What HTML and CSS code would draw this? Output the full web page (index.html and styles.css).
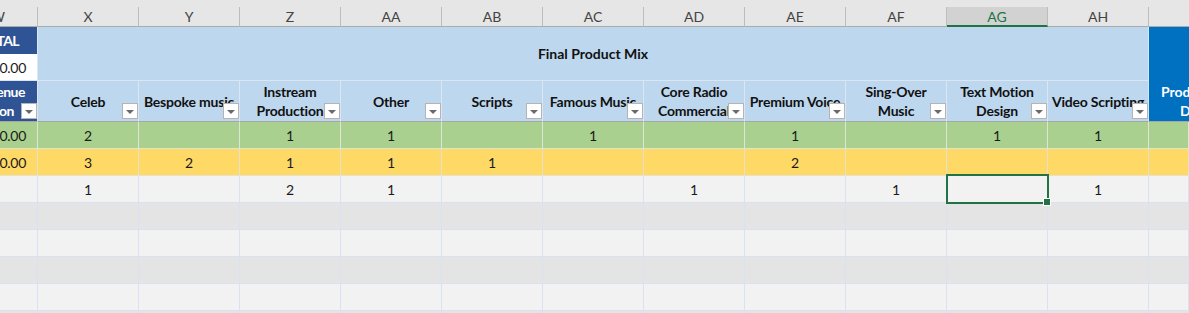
FILE: index.html
```html
<!DOCTYPE html>
<html>
<head>
<meta charset="utf-8">
<link rel="stylesheet" href="styles.css">
</head>
<body>
<div class="sheet">
  <div class="topstrip"></div>

  <div class="col col-w">W</div>
  <div class="col">X</div>
  <div class="col">Y</div>
  <div class="col">Z</div>
  <div class="col">AA</div>
  <div class="col">AB</div>
  <div class="col">AC</div>
  <div class="col">AD</div>
  <div class="col">AE</div>
  <div class="col">AF</div>
  <div class="col col-sel">AG</div>
  <div class="col">AH</div>
  <div class="col col-last"></div>

  <div class="navy total">TAL</div>
  <div class="title">Final Product Mix</div>
  <div class="bright bright-top"></div>
  <div class="whitecell amount">00.00</div>

  <div class="navy hdr-w"><span class="l1">enue</span><span class="l2">on</span><span class="dd"></span></div>
  <div class="hdr"><span>Celeb</span><span class="dd"></span></div>
  <div class="hdr"><span>Bespoke music</span><span class="dd"></span></div>
  <div class="hdr"><span>Instream<br>Production</span><span class="dd"></span></div>
  <div class="hdr"><span>Other</span><span class="dd"></span></div>
  <div class="hdr"><span>Scripts</span><span class="dd"></span></div>
  <div class="hdr"><span>Famous Music</span><span class="dd"></span></div>
  <div class="hdr"><span>Core Radio<br>Commercial</span><span class="dd"></span></div>
  <div class="hdr"><span>Premium Voice</span><span class="dd"></span></div>
  <div class="hdr"><span>Sing-Over<br>Music</span><span class="dd"></span></div>
  <div class="hdr"><span>Text Motion<br>Design</span><span class="dd"></span></div>
  <div class="hdr"><span>Video Scripting</span><span class="dd"></span></div>
  <div class="bright hdr-last"><span class="p1">Prod</span><span class="p2">D</span></div>

  <div class="c green amount">00.00</div>
  <div class="c green">2</div>
  <div class="c green"></div>
  <div class="c green">1</div>
  <div class="c green">1</div>
  <div class="c green"></div>
  <div class="c green">1</div>
  <div class="c green"></div>
  <div class="c green">1</div>
  <div class="c green"></div>
  <div class="c green">1</div>
  <div class="c green">1</div>
  <div class="c green"></div>

  <div class="c yellow amount">00.00</div>
  <div class="c yellow">3</div>
  <div class="c yellow">2</div>
  <div class="c yellow">1</div>
  <div class="c yellow">1</div>
  <div class="c yellow">1</div>
  <div class="c yellow"></div>
  <div class="c yellow"></div>
  <div class="c yellow">2</div>
  <div class="c yellow"></div>
  <div class="c yellow"></div>
  <div class="c yellow"></div>
  <div class="c yellow"></div>

  <div class="c light"></div>
  <div class="c light">1</div>
  <div class="c light"></div>
  <div class="c light">2</div>
  <div class="c light">1</div>
  <div class="c light"></div>
  <div class="c light"></div>
  <div class="c light">1</div>
  <div class="c light"></div>
  <div class="c light">1</div>
  <div class="c light selected"><span class="selbox"></span><span class="handle"></span></div>
  <div class="c light">1</div>
  <div class="c light"></div>

  <div class="c dark"></div><div class="c dark"></div><div class="c dark"></div><div class="c dark"></div><div class="c dark"></div><div class="c dark"></div><div class="c dark"></div><div class="c dark"></div><div class="c dark"></div><div class="c dark"></div><div class="c dark"></div><div class="c dark"></div><div class="c dark"></div>

  <div class="c light"></div><div class="c light"></div><div class="c light"></div><div class="c light"></div><div class="c light"></div><div class="c light"></div><div class="c light"></div><div class="c light"></div><div class="c light"></div><div class="c light"></div><div class="c light"></div><div class="c light"></div><div class="c light"></div>

  <div class="c dark"></div><div class="c dark"></div><div class="c dark"></div><div class="c dark"></div><div class="c dark"></div><div class="c dark"></div><div class="c dark"></div><div class="c dark"></div><div class="c dark"></div><div class="c dark"></div><div class="c dark"></div><div class="c dark"></div><div class="c dark"></div>

  <div class="c light"></div><div class="c light"></div><div class="c light"></div><div class="c light"></div><div class="c light"></div><div class="c light"></div><div class="c light"></div><div class="c light"></div><div class="c light"></div><div class="c light"></div><div class="c light"></div><div class="c light"></div><div class="c light"></div>

  <div class="c dark"></div><div class="c dark"></div><div class="c dark"></div><div class="c dark"></div><div class="c dark"></div><div class="c dark"></div><div class="c dark"></div><div class="c dark"></div><div class="c dark"></div><div class="c dark"></div><div class="c dark"></div><div class="c dark"></div><div class="c dark"></div>
</div>
</body>
</html>
```

FILE: styles.css
```css
html, body {
  margin: 0;
  padding: 0;
  height: 313px;
  overflow: hidden;
  background: #e6e6e6;
}

.sheet {
  display: grid;
  grid-template-columns: 38px repeat(11, 101px) 1fr;
  grid-template-rows: 7px 20px 27px 27px 41px repeat(8, 27px);
  width: 1189px;
  font-family: Lato, "Open Sans", "Liberation Sans", sans-serif;
  font-size: 14px;
  color: #1a1a1a;
}

.sheet > div {
  box-sizing: border-box;
  overflow: hidden;
  white-space: nowrap;
}

.topstrip {
  grid-column: 1 / -1;
  background: #e6e6e6;
}

/* column letters */
.col {
  display: flex;
  align-items: center;
  justify-content: center;
  background: #e6e6e6;
  color: #444;
  font-size: 14px;
  border-right: 1px solid #bdbdbd;
  border-bottom: 1px solid #ababab;
}
.col-w {
  justify-content: flex-end;
  padding-right: 32px;
}
.col-last {
  border-right: none;
}
.col-sel {
  background: #d2d2d2;
  color: #217346;
  border-bottom: 2px solid #217346;
}

/* top rows */
.navy {
  background: #2f5496;
  color: #fff;
  font-weight: 700;
}
.total {
  display: flex;
  align-items: center;
  justify-content: flex-end;
  padding-right: 18px;
  letter-spacing: -0.6px;
  border-right: 1px solid #dce6f2;
}
.whitecell {
  background: #fff;
  border-right: 1px solid #dce6f2;
  border-bottom: 1px solid #dce6f2;
}
.amount {
  display: flex;
  align-items: center;
  justify-content: flex-end;
  padding-right: 11px;
  letter-spacing: -0.3px;
}
.title {
  grid-column: 2 / 13;
  grid-row: span 2;
  display: flex;
  align-items: center;
  justify-content: center;
  background: #bdd7ee;
  font-weight: 700;
  color: #111;
  border-right: 1px solid #dce6f2;
  border-bottom: 1px solid #dce6f2;
}
.bright {
  background: #0070c0;
  color: #fff;
  font-weight: 700;
}
.bright-top {
  grid-row: span 2;
}

/* header row */
.hdr {
  position: relative;
  display: flex;
  align-items: center;
  justify-content: center;
  text-align: center;
  line-height: 19px;
  letter-spacing: -0.2px;
  font-weight: 700;
  color: #111;
  background: #bdd7ee;
  border-right: 1px solid #dce6f2;
  border-bottom: 1px solid #a6a6a6;
}
.hdr-w {
  position: relative;
  display: flex;
  flex-direction: column;
  justify-content: center;
  align-items: flex-end;
  line-height: 19px;
  letter-spacing: -0.5px;
  border-right: 1px solid #dce6f2;
  border-bottom: 1px solid #a6a6a6;
}
.hdr-w .l1 { padding-right: 12px; }
.hdr-w .l2 { padding-right: 23px; }
.hdr-last {
  display: flex;
  flex-direction: column;
  justify-content: center;
  line-height: 19px;
  border-bottom: 1px solid #a6a6a6;
}
.hdr-last .p1 { padding-left: 12px; }
.hdr-last .p2 { padding-left: 31px; }

.dd {
  position: absolute;
  right: 0;
  bottom: 2px;
  width: 16px;
  height: 16px;
  box-sizing: border-box;
  background: #fff;
  border: 1px solid #b4b4b4;
  display: flex;
  align-items: center;
  justify-content: center;
  padding-top: 2px;
}
.dd::before {
  content: "";
  width: 0;
  height: 0;
  border-left: 4px solid transparent;
  border-right: 4px solid transparent;
  border-top: 4px solid #6a6a6a;
}

/* data cells */
.c {
  display: flex;
  align-items: center;
  justify-content: center;
  border-right: 1px solid #d9e1f2;
  border-bottom: 1px solid #d9e1f2;
}
.c.amount {
  justify-content: flex-end;
}
.green {
  background: #a9d08e;
  border-color: #dbe6d4;
}
.yellow {
  background: #ffd966;
  border-color: #e6e0cc;
}
.light {
  background: #f2f2f2;
}
.dark {
  background: #e4e4e4;
}

.sheet > .selected {
  position: relative;
  overflow: visible;
}
.selbox {
  position: absolute;
  left: -1px;
  top: -2px;
  width: 103px;
  height: 30px;
  box-sizing: border-box;
  border: 2px solid #217346;
}
.handle {
  position: absolute;
  left: 97px;
  top: 23px;
  width: 6px;
  height: 6px;
  background: #217346;
  outline: 1px solid #fff;
}
```
